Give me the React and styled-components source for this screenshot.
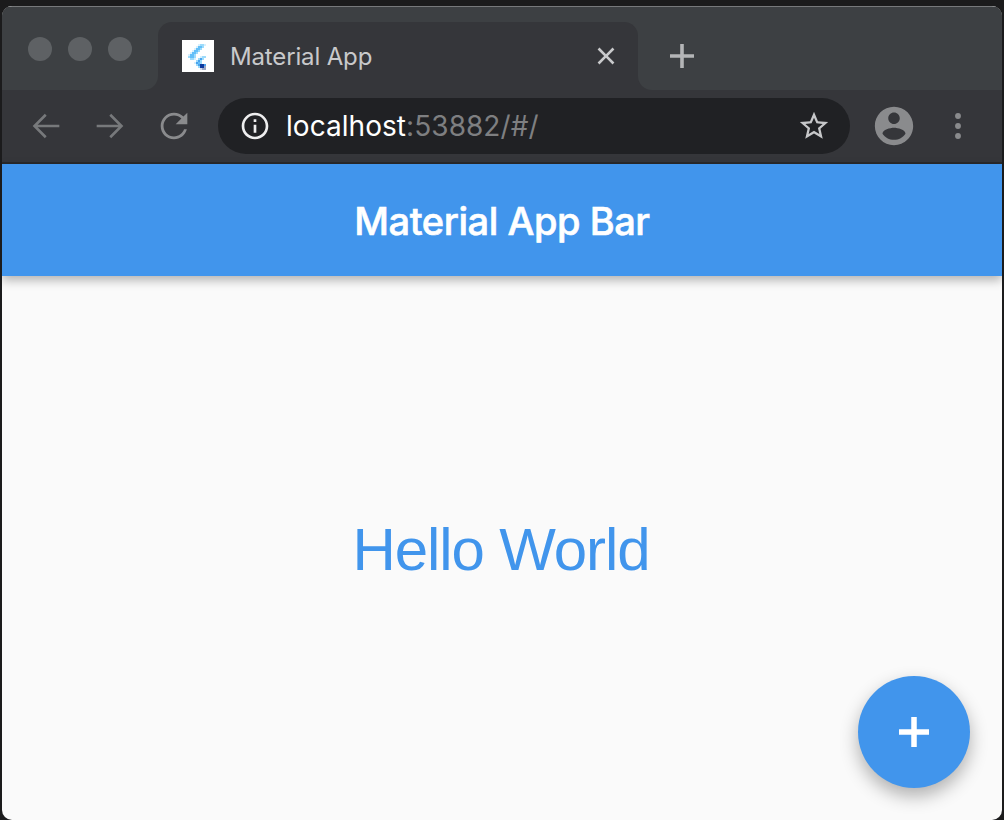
import styled, { createGlobalStyle } from 'styled-components';

const GlobalStyle = createGlobalStyle`
  html, body {
    margin: 0;
    height: 100%;
    background: #1b1b1c;
    overflow: hidden;
  }
  #root {
    height: 100%;
  }
`;

const BLUE = '#4195ec';

// the favicon in the shot is a 16x16 bitmap blown up, so it is drawn cell by cell
const FAVICON_COLORS = {
  a: '#d8f0fd',
  b: '#9ddbfb',
  c: '#63bff8',
  d: '#4aa3ee',
  e: '#0e3a9e',
  f: '#9aa6c6',
  g: '#d3d9e8',
};

const FAVICON_ROWS = [
  '................',
  '................',
  '........abba....',
  '.......accb.....',
  '......accb......',
  '.....accb.......',
  '....accb........',
  '...accb.........',
  '...bccb..abb....',
  '....bba.bdb.....',
  '.......bdb......',
  '......adcb......',
  '.......bdeed....',
  '........beef....',
  '.........gff....',
  '................',
];

const Icon = ({ size = 24, color = 'currentColor', children }) => (
  <svg width={size} height={size} viewBox="0 0 24 24" fill={color}>
    {children}
  </svg>
);

const Favicon = () => (
  <FaviconSvg viewBox="0 0 16 16" shapeRendering="crispEdges">
    <rect width="16" height="16" fill="#fff" />
    {FAVICON_ROWS.map((row, y) =>
      row.split('').map((cell, x) =>
        cell === '.' ? null : (
          <rect key={`${x}-${y}`} x={x} y={y} width="1" height="1" fill={FAVICON_COLORS[cell]} />
        )
      )
    )}
  </FaviconSvg>
);

const App = () => {
  return (
    <>
      <GlobalStyle />
      <Page>
        <Browser>
          <TitleBar>
            <LightsArea>
              <Light />
              <Light />
              <Light />
            </LightsArea>
            <Tab>
              <Favicon />
              <TabTitle>Material App</TabTitle>
              <TabClose>
                <Icon size={32} color="#c8c9cb">
                  <path d="M18.3 7.1 16.9 5.7 12 10.6 7.1 5.7 5.7 7.1l4.9 4.9-4.9 4.9 1.4 1.4 4.9-4.9 4.9 4.9 1.4-1.4-4.9-4.9z" />
                </Icon>
              </TabClose>
            </Tab>
            <NewTabArea>
              <NewTab>
                <Icon size={24} color="#b4b5b7">
                  <path d="M10.200 0h3.600v10.200H24v3.600H13.800V24h-3.600V13.800H0v-3.600h10.200z" />
                </Icon>
              </NewTab>
            </NewTabArea>
          </TitleBar>

          <Toolbar>
            <ToolButton>
              <Icon size={40} color="#77797b">
                <path d="M20 11.200H7l5.400-5.400L11.300 4.700 4 12l7.300 7.300 1.100-1.100L7 12.800H20z" />
              </Icon>
            </ToolButton>
            <ToolButton>
              <Icon size={40} color="#77797b">
                <path d="M4 11.200h13l-5.400-5.400 1.100-1.100L20 12l-7.300 7.300-1.100-1.100 5.400-5.400H4z" />
              </Icon>
            </ToolButton>
            <ToolButton>
              <Icon size={40} color="#8a8b8d">
                <path d="M17.650 6.350C16.200 4.900 14.210 4 12 4c-4.420 0-7.990 3.580-7.990 8s3.570 8 7.990 8c3.730 0 6.840-2.550 7.730-6h-1.700c-.82 2.450-3.200 4.300-6.030 4.300-3.480 0-6.300-2.820-6.300-6.300S8.520 5.700 12 5.700c1.740 0 3.300.72 4.440 1.860L13 11h7V4l-2.350 2.350z" />
              </Icon>
            </ToolButton>
            <AddressBar>
              <Icon size={32} color="#eeeeef">
                <path d="M11 7h2v2h-2zm0 4h2v6h-2zm1-9C6.480 2 2 6.480 2 12s4.480 10 10 10 10-4.480 10-10S17.520 2 12 2zm0 18c-4.410 0-8-3.590-8-8s3.590-8 8-8 8 3.590 8 8-3.590 8-8 8z" />
              </Icon>
              <Url>
                localhost<UrlRest>:53882/#/</UrlRest>
              </Url>
              <Star>
                <Icon size={34} color="#c6c7c9">
                  <path d="M22 9.240l-7.190-.62L12 2 9.190 8.630 2 9.240l5.460 4.730L5.820 21 12 17.270 18.180 21l-1.630-7.030L22 9.240zM12 15.400l-3.760 2.270 1-4.280-3.320-2.880 4.380-.38L12 6.100l1.710 4.040 4.380.38-3.320 2.880 1 4.280L12 15.400z" />
                </Icon>
              </Star>
            </AddressBar>
            <ToolButton>
              <Icon size={46} color="#8a8b8d">
                <path d="M12 2C6.480 2 2 6.480 2 12s4.480 10 10 10 10-4.480 10-10S17.520 2 12 2zm0 3c1.660 0 3 1.340 3 3s-1.340 3-3 3-3-1.340-3-3 1.340-3 3-3zm0 14.200c-2.500 0-4.710-1.280-6-3.220.03-1.990 4-3.080 6-3.080 1.990 0 5.970 1.090 6 3.080-1.290 1.940-3.500 3.220-6 3.220z" />
              </Icon>
            </ToolButton>
            <ToolButton>
              <Icon size={32} color="#8a8b8d">
                <circle cx="12" cy="4.500" r="2.200" />
                <circle cx="12" cy="12" r="2.200" />
                <circle cx="12" cy="19.500" r="2.200" />
              </Icon>
            </ToolButton>
          </Toolbar>

          <AppBar>Material App Bar</AppBar>
          <Content>
            <Hello>Hello World</Hello>
            <Fab>
              <Icon size={30} color="#fff">
                <path d="M9.800 0h4.400v9.800H24v4.400h-9.800V24H9.800v-9.800H0V9.800h9.800z" />
              </Icon>
            </Fab>
          </Content>
        </Browser>
      </Page>
    </>
  );
};

const Page = styled.div`
  height: 100%;
  box-sizing: border-box;
  padding: 6px 2px 0;
  font-family: Inter, "Liberation Sans", sans-serif;
`;

const Browser = styled.div`
  height: 100%;
  display: flex;
  flex-direction: column;
  border-radius: 10px;
  overflow: hidden;
  background: #fafafa;
`;

const TitleBar = styled.div`
  height: 84px;
  flex: none;
  display: flex;
  border-top: 1px solid #77797b;
  box-sizing: border-box;
  background: linear-gradient(#3d4043 50%, #35363a 50%);
`;

const LightsArea = styled.div`
  width: 156px;
  flex: none;
  box-sizing: border-box;
  display: flex;
  align-items: center;
  gap: 16px;
  padding: 0 0 0 26px;
  background: #3d4043;
  border-bottom-right-radius: 14px;
`;

const Light = styled.span`
  width: 24px;
  height: 24px;
  border-radius: 50%;
  background: #5e6164;
`;

const Tab = styled.div`
  width: 480px;
  flex: none;
  margin-top: 15px;
  box-sizing: border-box;
  display: flex;
  align-items: center;
  padding: 0 16px 0 24px;
  background: #35363a;
  border-radius: 14px 14px 0 0;
`;

const FaviconSvg = styled.svg`
  width: 32px;
  height: 32px;
  flex: none;
`;

const TabTitle = styled.span`
  margin-left: 16px;
  flex: 1;
  font-size: 24px;
  letter-spacing: -0.15px;
  color: #c8c9cb;
`;

const TabClose = styled.span`
  display: flex;
`;

const NewTabArea = styled.div`
  flex: 1;
  display: flex;
  align-items: center;
  padding: 15px 0 0 32px;
  background: #3d4043;
  border-bottom-left-radius: 14px;
`;

const NewTab = styled.span`
  display: flex;
`;

const Toolbar = styled.div`
  height: 74px;
  flex: none;
  box-sizing: border-box;
  display: flex;
  align-items: center;
  padding: 0 12px;
  background: #35363a;
  border-bottom: 2px solid #29292b;
`;

const ToolButton = styled.span`
  width: 64px;
  flex: none;
  display: flex;
  justify-content: center;
`;

const AddressBar = styled.div`
  flex: 1;
  height: 56px;
  margin: 0 12px;
  box-sizing: border-box;
  display: flex;
  align-items: center;
  padding: 0 19px 0 21px;
  border-radius: 28px;
  background: #202124;
`;

const Url = styled.span`
  flex: 1;
  margin-left: 15px;
  font-size: 28px;
  letter-spacing: 0.05px;
  color: #fff;
`;

const UrlRest = styled.span`
  color: #7e7f81;
`;

const Star = styled.span`
  display: flex;
`;

const AppBar = styled.header`
  height: 112px;
  flex: none;
  box-sizing: border-box;
  padding-top: 2px;
  display: flex;
  align-items: center;
  justify-content: center;
  background: ${BLUE};
  color: #fff;
  font-size: 38px;
  font-weight: 500;
  letter-spacing: -0.45px;
  -webkit-text-stroke: 0.6px #fff;
  box-shadow: 0 4px 10px rgba(0, 0, 0, 0.3);
  position: relative;
  z-index: 1;
`;

const Content = styled.main`
  flex: 1;
  position: relative;
  display: flex;
  align-items: center;
  justify-content: center;
`;

const Hello = styled.div`
  margin: 2px 2px 0 0;
  font-family: "Liberation Sans", sans-serif;
  font-size: 60px;
  letter-spacing: -1.1px;
  color: ${BLUE};
`;

const Fab = styled.button`
  position: absolute;
  right: 32px;
  bottom: 32px;
  width: 112px;
  height: 112px;
  padding: 0;
  border: none;
  border-radius: 50%;
  display: flex;
  align-items: center;
  justify-content: center;
  background: ${BLUE};
  box-shadow: 0 8px 18px rgba(0, 0, 0, 0.3);
`;

export default App;
